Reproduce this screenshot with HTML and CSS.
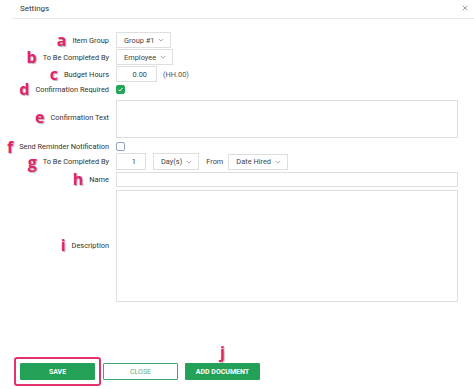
FILE: index.html
```html
<!DOCTYPE html>
<html lang="en">
<head>
    <meta charset="UTF-8">
    <title>Settings</title>
    <link rel="stylesheet" href="styles.css">
</head>
<body>
    <div class="dialog">
        <header class="dialog-head">
            <span class="title">Settings</span>
            <svg class="close" viewBox="0 0 8 8"><path d="M1 1l6 6M7 1l-6 6"/></svg>
        </header>

        <div class="form">
            <div class="label"><span class="mark">a</span>Item Group</div>
            <div class="field"><div class="select">Group #1 <svg class="chev" viewBox="0 0 8 5"><path d="M1 1l3 3 3-3"/></svg></div></div>

            <div class="label"><span class="mark">b</span>To Be Completed By</div>
            <div class="field"><div class="select">Employee <svg class="chev" viewBox="0 0 8 5"><path d="M1 1l3 3 3-3"/></svg></div></div>

            <div class="label"><span class="mark">c</span>Budget Hours</div>
            <div class="field"><div class="input num hours">0.00</div><span class="hint">(HH.00)</span></div>

            <div class="label row-check"><span class="mark">d</span>Confirmation Required</div>
            <div class="field row-check"><span class="check on"><svg viewBox="0 0 10 10"><path d="M2 5.2l2 2 4-4.4"/></svg></span></div>

            <div class="label"><span class="mark">e</span>Confirmation Text</div>
            <div class="field"><div class="textarea confirm"></div></div>

            <div class="label row-check2"><span class="mark">f</span>Send Reminder Notification</div>
            <div class="field row-check2"><span class="check"></span></div>

            <div class="label"><span class="mark">g</span>To Be Completed By</div>
            <div class="field">
                <div class="input num days">1</div>
                <div class="select unit">Day(s) <svg class="chev" viewBox="0 0 8 5"><path d="M1 1l3 3 3-3"/></svg></div>
                <span class="from">From</span>
                <div class="select">Date Hired <svg class="chev" viewBox="0 0 8 5"><path d="M1 1l3 3 3-3"/></svg></div>
            </div>

            <div class="label"><span class="mark">h</span>Name</div>
            <div class="field"><div class="input wide"></div></div>

            <div class="label"><span class="mark">i</span>Description</div>
            <div class="field"><div class="textarea desc"></div></div>
        </div>

        <div class="actions">
            <div class="save-wrap"><button class="btn green">SAVE</button></div>
            <button class="btn outline">CLOSE</button>
            <div class="doc-wrap">
                <span class="mark j">j</span>
                <button class="btn green">ADD DOCUMENT</button>
            </div>
        </div>
    </div>
</body>
</html>
```

FILE: styles.css
```css
html, body {
    overflow: hidden;
}
body {
    margin: 0;
    font-family: Roboto, "Liberation Sans", sans-serif;
    font-size: 7.4px;
    color: #444;
    background: #fff;
}
.dialog {
    width: 474px;
    height: 389px;
    overflow: hidden;
}
.dialog-head {
    box-sizing: border-box;
    width: 462px;
    display: flex;
    justify-content: space-between;
    align-items: center;
    height: 19px;
    margin-left: 12px;
    padding: 0 6px 0 8px;
    border-bottom: 1px solid #e8e8e8;
}
.title {
    font-size: 8px;
    color: #333;
    padding-bottom: 2px;
}
.close {
    width: 6px;
    height: 6px;
    margin-bottom: 2px;
    fill: none;
    stroke: #777;
    stroke-width: 1;
}
.form {
    display: grid;
    grid-template-columns: 109px 342px;
    column-gap: 7px;
    row-gap: 1px;
    padding-top: 13px;
}
.label {
    display: flex;
    justify-content: flex-end;
    align-items: center;
    gap: 6px;
    line-height: 9px;
    color: #333;
    white-space: nowrap;
}
.field {
    display: flex;
    align-items: center;
}
.row-check {
    height: 12px;
}
.row-check2 {
    height: 11px;
    margin-top: 2px;
}
.mark {
    font-family: "Open Sans", "Liberation Sans", sans-serif;
    font-weight: 700;
    font-size: 16px;
    line-height: 8px;
    height: 8px;
    display: flex;
    align-items: center;
    color: #e0236a;
    text-shadow: 1px 1px 1px rgba(0, 0, 0, 0.3);
}
.select, .input, .textarea {
    box-sizing: border-box;
    border: 1px solid #dedede;
    background: #fff;
    color: #444;
}
.select {
    display: flex;
    align-items: center;
    gap: 4px;
    height: 16px;
    padding: 0 6px 0 7px;
}
.chev {
    width: 6px;
    height: 4px;
    fill: none;
    stroke: #888;
    stroke-width: 1;
}
.input {
    height: 16px;
    display: flex;
    align-items: center;
}
.num {
    justify-content: flex-end;
    padding-right: 9px;
}
.hours {
    width: 41px;
}
.hint {
    margin-left: 6px;
    color: #555;
}
.days {
    width: 30px;
    height: 17px;
}
.unit {
    margin-left: 7px;
    height: 17px;
}
.from {
    margin: 0 5px 0 7px;
}
.wide {
    width: 342px;
    height: 15px;
    margin-top: 1px;
}
.textarea {
    width: 342px;
}
.confirm {
    height: 38px;
    margin-top: 4px;
}
.desc {
    height: 112px;
    margin-top: 2px;
}
.check {
    box-sizing: border-box;
    width: 9px;
    height: 9px;
    border: 1px solid #8fa3c2;
    border-radius: 2px;
    display: flex;
}
.check.on {
    background: #22a355;
    border-color: #22a355;
}
.check svg {
    width: 100%;
    height: 100%;
    fill: none;
    stroke: #fff;
    stroke-width: 1.4;
}
.actions {
    display: flex;
    align-items: flex-end;
    gap: 2px;
    margin: 44px 0 0 14px;
}
.save-wrap {
    padding: 4px 4px;
    border: 2px solid #e2336b;
    border-radius: 3px;
}
.btn {
    width: 75px;
    height: 17px;
    font-family: Roboto, "Liberation Sans", sans-serif;
    font-size: 7px;
    font-weight: 700;
    border-radius: 1px;
    padding: 0;
}
.green {
    background: #23a157;
    border: 1px solid #23a157;
    color: #fff;
}
.outline {
    background: #fff;
    border: 1px solid #3aa86a;
    color: #5dae80;
    font-weight: 400;
    margin-bottom: 6px;
}
.doc-wrap {
    display: flex;
    flex-direction: column;
    align-items: center;
    gap: 5px;
    margin-left: 5px;
    margin-bottom: 6px;
}
.j {
    font-size: 16px;
    line-height: 12px;
    height: 12px;
}
```
